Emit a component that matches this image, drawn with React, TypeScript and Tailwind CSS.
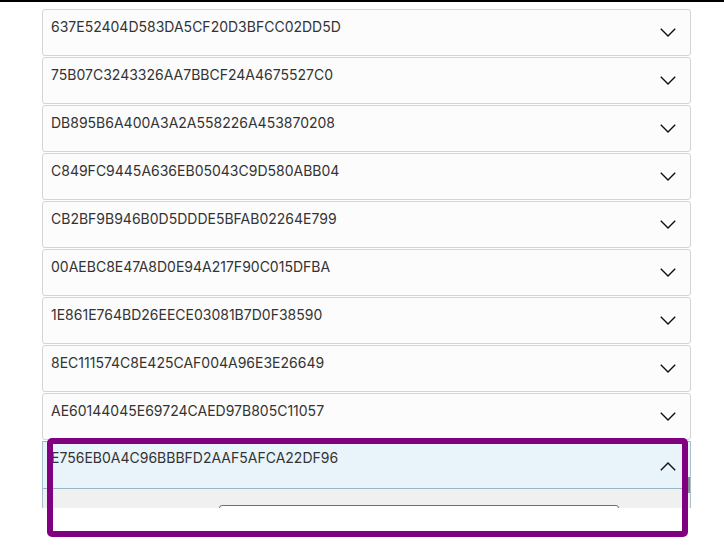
const IDS = [
  "637E52404D583DA5CF20D3BFCC02DD5D",
  "75B07C3243326AA7BBCF24A4675527C0",
  "DB895B6A400A3A2A558226A453870208",
  "C849FC9445A636EB05043C9D580ABB04",
  "CB2BF9B946B0D5DDDE5BFAB02264E799",
  "00AEBC8E47A8D0E94A217F90C015DFBA",
  "1E861E764BD26EECE03081B7D0F38590",
  "8EC111574C8E425CAF004A96E3E26649",
  "AE60144045E69724CAED97B805C11057",
];

const OPEN_ID = "E756EB0A4C96BBBFD2AAF5AFCA22DF96";

function Chevron({ up = false }: { up?: boolean }) {
  return (
    <svg width="16" height="9" viewBox="0 0 16 9" fill="none" stroke="#111" strokeWidth="1.4">
      {up ? <path d="M0.8 8.2 L8 1 L15.2 8.2" /> : <path d="M0.8 0.8 L8 8 L15.2 0.8" />}
    </svg>
  );
}

export default function App() {
  return (
    <div
      className="relative h-[549px] w-[724px] overflow-hidden bg-white"
      style={{ fontFamily: "Inter, 'Noto Sans', sans-serif" }}
    >
      <div className="h-[2px] bg-black" />

      {/* list, clipped where the page ends */}
      <div className="h-[506px] overflow-hidden pl-[42px] pr-[33px] pt-[7px]">
        <div className="flex flex-col gap-px">
          {IDS.map(id => (
            <div
              key={id}
              className="flex h-[47px] justify-between rounded-[3px] border border-[#d4d4d4] bg-[#fcfcfc] pl-[8px] pr-[14px]"
            >
              <span className="pt-[7px] text-[14px] leading-[20px] text-[#333]">{id}</span>
              <span className="flex items-center">
                <Chevron />
              </span>
            </div>
          ))}

          {/* expanded item */}
          <div className="relative border-x border-[#a9bfd2]">
            <div className="flex h-[48px] justify-between border-y border-[#9ab3c9] bg-[#e8f3fa] pl-[8px] pr-[14px]">
              <span className="pt-[6px] text-[14px] leading-[20px] text-[#333]">{OPEN_ID}</span>
              <span className="flex items-center pt-[2px]">
                <Chevron up />
              </span>
            </div>
            <div className="h-[80px] bg-[#f0f0f0] pt-[16px]">
              <div className="ml-[176px] h-[30px] w-[400px] rounded-[3px] border border-[#6f6f6f] bg-white" />
            </div>
            <div className="absolute right-0 top-[36px] h-[16px] w-[3px] bg-[#8c8c8c]" />
          </div>
        </div>
      </div>

      {/* highlight box */}
      <div className="absolute left-[47px] top-[438px] h-[99px] w-[641px] rounded-[5px] border-[6px] border-[#800080]" />
    </div>
  );
}
